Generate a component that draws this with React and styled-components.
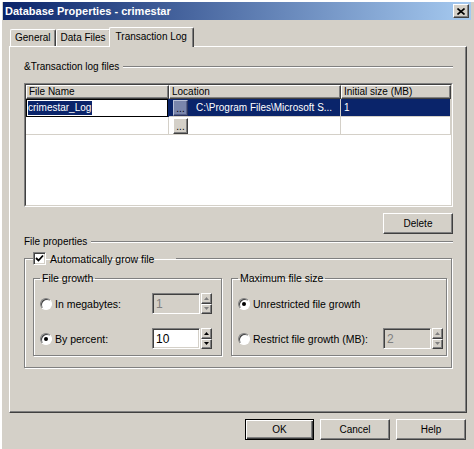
import styled, { createGlobalStyle, css } from "styled-components";

const GlobalStyle = createGlobalStyle`
  html, body {
    margin: 0;
    padding: 0;
    background: #d4d0c8;
  }
  body {
    font-family: "Liberation Sans", Arial, sans-serif;
    font-size: 10px;
    color: #000;
  }
  * {
    box-sizing: border-box;
  }
`;

const raised = css`
  border: 1px solid;
  border-color: #fff #404040 #404040 #fff;
  box-shadow: inset -1px -1px 0 #808080;
  background: #d4d0c8;
`;

const sunken = css`
  border: 1px solid;
  border-color: #808080 #fff #fff #808080;
  box-shadow: inset 1px 1px 0 #404040, inset -1px -1px 0 #d4d0c8;
`;

function CloseIcon() {
  return (
    <svg width="8" height="7" viewBox="0 0 8 7">
      <path d="M0.5 0.5 L7.5 6.5 M7.5 0.5 L0.5 6.5" stroke="#000" strokeWidth="1.6" />
    </svg>
  );
}

function CheckIcon() {
  return (
    <svg width="9" height="9" viewBox="0 0 9 9">
      <path d="M1 4 L3.5 6.5 L8 1.5" stroke="#000" strokeWidth="1.8" fill="none" />
    </svg>
  );
}

function Arrow({ up, disabled }) {
  return (
    <svg width="5" height="3" viewBox="0 0 5 3">
      <path d={up ? "M0 3 L2.5 0 L5 3 Z" : "M0 0 L2.5 3 L5 0 Z"} fill={disabled ? "#808080" : "#000"} />
    </svg>
  );
}

function Spin({ value, disabled }) {
  return (
    <SpinBox>
      <SpinField $disabled={disabled}>{value}</SpinField>
      <SpinButtons>
        <SpinButton>
          <Arrow up disabled={disabled} />
        </SpinButton>
        <SpinButton>
          <Arrow disabled={disabled} />
        </SpinButton>
      </SpinButtons>
    </SpinBox>
  );
}

function RadioOption({ label, checked, value, disabled }) {
  return (
    <OptionRow>
      <Radio>{checked && <RadioDot />}</Radio>
      <OptionLabel>{label}</OptionLabel>
      <Spin value={value} disabled={disabled} />
    </OptionRow>
  );
}

function App() {
  return (
    <>
      <GlobalStyle />
      <Window>
        <TitleBar>
          <TitleText>Database Properties - crimestar</TitleText>
          <CloseButton>
            <CloseIcon />
          </CloseButton>
        </TitleBar>
        <Body>
          <TabStrip>
            <Tab>General</Tab>
            <Tab>Data Files</Tab>
            <Tab $active>Transaction Log</Tab>
          </TabStrip>
          <Panel>
            <Heading>
              &amp;Transaction log files
              <Rule />
            </Heading>
            <TableFrame>
              <TableInner>
                <GridRow>
                  <HeaderCell>File Name</HeaderCell>
                  <HeaderCell>Location</HeaderCell>
                  <HeaderCell>Initial size (MB)</HeaderCell>
                </GridRow>
                <GridRow $selected>
                  <EditCell>
                    <Highlight>crimestar_Log</Highlight>
                  </EditCell>
                  <Cell>
                    <BrowseButton $selected>...</BrowseButton>
                    <CellText>C:\Program Files\Microsoft S...</CellText>
                  </Cell>
                  <Cell>
                    <CellText>1</CellText>
                  </Cell>
                </GridRow>
                <GridRow>
                  <Cell />
                  <Cell>
                    <BrowseButton>...</BrowseButton>
                  </Cell>
                  <Cell />
                </GridRow>
              </TableInner>
            </TableFrame>
            <ButtonRow>
              <PushButton $width={70}>Delete</PushButton>
            </ButtonRow>
            <Heading $top={1}>
              File properties
              <Rule />
            </Heading>
            <OuterGroup>
              <CheckLegend>
                <Checkbox>
                  <CheckIcon />
                </Checkbox>
                Automatically grow file
              </CheckLegend>
              <GroupRow>
                <InnerGroup $width={189} $padRight={9}>
                  <GroupLegend>File growth</GroupLegend>
                  <RadioOption label="In megabytes:" value="1" disabled />
                  <RadioOption label="By percent:" value="10" checked />
                </InnerGroup>
                <InnerGroup $width={216} $padRight={3}>
                  <GroupLegend>Maximum file size</GroupLegend>
                  <OptionRow>
                    <Radio>
                      <RadioDot />
                    </Radio>
                    <OptionLabel>Unrestricted file growth</OptionLabel>
                  </OptionRow>
                  <RadioOption label="Restrict file growth (MB):" value="2" disabled />
                </InnerGroup>
              </GroupRow>
            </OuterGroup>
          </Panel>
          <Footer>
            <PushButton $width={69} $default>
              OK
            </PushButton>
            <PushButton $width={70}>Cancel</PushButton>
            <PushButton $width={70}>Help</PushButton>
          </Footer>
        </Body>
      </Window>
    </>
  );
}

const Window = styled.div`
  width: 474px;
  height: 449px;
  padding: 2px 3px 0 3px;
  background: #d4d0c8;
  box-shadow: inset 2px 2px 0 #fff;
  overflow: hidden;
  display: flex;
  flex-direction: column;
`;

const TitleBar = styled.div`
  height: 18px;
  display: flex;
  align-items: center;
  justify-content: space-between;
  padding: 0 2px 0 2px;
  background: linear-gradient(to right, #0a246a, #a6caf0);
`;

const TitleText = styled.span`
  color: #fff;
  font-weight: bold;
  font-size: 11px;
`;

const CloseButton = styled.div`
  ${raised};
  width: 16px;
  height: 14px;
  display: flex;
  align-items: center;
  justify-content: center;
`;

const Body = styled.div`
  padding: 7px 4px 0 6px;
  display: flex;
  flex-direction: column;
`;

const TabStrip = styled.div`
  height: 19px;
  display: flex;
  align-items: flex-end;
  padding-left: 1px;
`;

const Tab = styled.div`
  height: 17px;
  padding: 0 4px;
  line-height: 16px;
  border: 1px solid;
  border-color: #fff #404040 transparent #fff;
  border-bottom: none;
  border-radius: 2px 2px 0 0;
  box-shadow: inset -1px 0 0 #808080;
  background: #d4d0c8;
  white-space: nowrap;
  ${({ $active }) =>
    $active &&
    css`
      height: 20px;
      margin: 0 -2px -1px -2px;
      padding: 0 6px;
      line-height: 17px;
      position: relative;
      z-index: 1;
    `}
`;

const Panel = styled.div`
  width: 458px;
  height: 367px;
  border: 1px solid;
  border-color: #fff #404040 #404040 #fff;
  box-shadow: inset -1px -1px 0 #808080;
  padding: 13px 13px 0 14px;
  display: flex;
  flex-direction: column;
`;

const Heading = styled.div`
  height: 13px;
  margin-top: ${({ $top }) => $top || 0}px;
  display: flex;
  align-items: center;
  white-space: nowrap;
`;

const Rule = styled.div`
  flex: 1;
  margin-left: 4px;
  border-top: 1px solid #808080;
  border-bottom: 1px solid #fff;
`;

const TableFrame = styled.div`
  margin-top: 10px;
  height: 124px;
  border: 1px solid;
  border-color: #808080 #fff #fff #808080;
`;

const TableInner = styled.div`
  height: 100%;
  background: #fff;
  border: 1px solid;
  border-color: #404040 #d4d0c8 #d4d0c8 #404040;
`;

const GridRow = styled.div`
  display: grid;
  grid-template-columns: 143px 172px 1fr;
  background: ${({ $selected }) => ($selected ? "#0a246a" : "#fff")};
  color: ${({ $selected }) => ($selected ? "#fff" : "#000")};
`;

const HeaderCell = styled.div`
  ${raised};
  height: 14px;
  padding-left: 2px;
  line-height: 12px;
  white-space: nowrap;
  color: #000;
`;

const Cell = styled.div`
  height: 18px;
  display: flex;
  align-items: center;
  border-right: 1px solid #d4d0c8;
  border-bottom: 1px solid #d4d0c8;
  white-space: nowrap;
  overflow: hidden;
`;

const CellText = styled.span`
  padding-left: 3px;
`;

const EditCell = styled.div`
  height: 18px;
  margin-right: 1px;
  background: #fff;
  border: 1px solid #000;
  display: flex;
  align-items: center;
  padding-left: 1px;
`;

const Highlight = styled.span`
  background: #0a246a;
  color: #fff;
  padding: 1px 1px 1px 0;
  line-height: 12px;
`;

const BrowseButton = styled.div`
  ${raised};
  width: 15px;
  height: 16px;
  margin-left: 4px;
  margin-right: 5px;
  display: flex;
  align-items: flex-end;
  justify-content: center;
  line-height: 12px;
  color: #000;
  flex-shrink: 0;
  ${({ $selected }) =>
    $selected &&
    css`
      background: #7a86ac;
      border-color: #b8c0d8 #2a3560 #2a3560 #b8c0d8;
      box-shadow: inset -1px -1px 0 #56608a;
    `}
`;

const ButtonRow = styled.div`
  margin-top: 6px;
  display: flex;
  justify-content: flex-end;
`;

const PushButton = styled.div`
  ${raised};
  width: ${({ $width }) => $width}px;
  height: 21px;
  display: flex;
  align-items: center;
  justify-content: center;
  ${({ $default }) =>
    $default &&
    css`
      border: 1px solid #000;
      box-shadow: inset 1px 1px 0 #fff, inset -1px -1px 0 #404040,
        inset -2px -2px 0 #808080;
    `}
`;

const OuterGroup = styled.fieldset`
  margin: 4px 1px 0 0;
  padding: 7px 4px 11px 8px;
  min-width: 0;
  border: 1px solid #808080;
  box-shadow: inset 1px 1px 0 #fff, 1px 1px 0 #fff;
`;

const CheckLegend = styled.legend`
  padding: 0 22px 0 0;
  height: 13px;
  display: flex;
  align-items: center;
  gap: 4px;
  font-size: 10.5px;
`;

const Checkbox = styled.span`
  ${sunken};
  width: 13px;
  height: 13px;
  background: #fff;
  display: flex;
  align-items: center;
  justify-content: center;
`;

const GroupRow = styled.div`
  display: flex;
  gap: 9px;
`;

const InnerGroup = styled.fieldset`
  width: ${({ $width }) => $width}px;
  margin: 0;
  min-width: 0;
  padding: 8px ${({ $padRight }) => $padRight}px 6px 6px;
  border: 1px solid #808080;
  box-shadow: inset 1px 1px 0 #fff, 1px 1px 0 #fff;
  display: flex;
  flex-direction: column;
  gap: 14px;
`;

const GroupLegend = styled.legend`
  padding: 0 2px;
  height: 13px;
  line-height: 13px;
  font-size: 10.5px;
`;

const OptionRow = styled.div`
  height: 21px;
  display: flex;
  align-items: center;
`;

const Radio = styled.span`
  width: 12px;
  height: 12px;
  border-radius: 50%;
  background: #fff;
  border: 1px solid;
  border-color: #808080 #fff #fff #808080;
  box-shadow: inset 1px 1px 0 #404040;
  display: flex;
  align-items: center;
  justify-content: center;
  flex-shrink: 0;
`;

const RadioDot = styled.span`
  width: 4px;
  height: 4px;
  border-radius: 50%;
  background: #000;
`;

const OptionLabel = styled.span`
  flex: 1;
  margin-left: 3px;
  font-size: 10.5px;
  white-space: nowrap;
`;

const SpinBox = styled.div`
  display: flex;
  height: 21px;
`;

const SpinField = styled.div`
  ${sunken};
  width: 48px;
  height: 21px;
  padding-left: 3px;
  display: flex;
  align-items: center;
  font-size: 12px;
  background: ${({ $disabled }) => ($disabled ? "#d4d0c8" : "#fff")};
  color: ${({ $disabled }) => ($disabled ? "#808080" : "#000")};
`;

const SpinButtons = styled.div`
  display: flex;
  flex-direction: column;
  margin-left: 1px;
`;

const SpinButton = styled.div`
  ${raised};
  width: 11px;
  height: 10.5px;
  display: flex;
  align-items: center;
  justify-content: center;
`;

const Footer = styled.div`
  margin-top: 6px;
  margin-right: 1px;
  display: flex;
  justify-content: flex-end;
  gap: 6px;
`;

export default App;
